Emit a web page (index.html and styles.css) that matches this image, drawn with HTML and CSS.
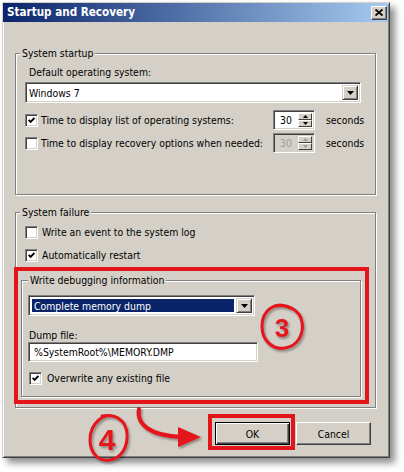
FILE: index.html
```html
<!DOCTYPE html>
<html>
<head>
<meta charset="utf-8">
<title>Startup and Recovery</title>
<link rel="stylesheet" href="styles.css">
</head>
<body>
<div class="stage">
  <div class="window">
    <div class="titlebar">
      <span class="title">Startup and Recovery</span>
      <span class="close"><svg width="8" height="7" viewBox="0 0 8 7"><path d="M0.5 0.5 L7.5 6.5 M7.5 0.5 L0.5 6.5" stroke="#000" stroke-width="1.8" fill="none"/></svg></span>
    </div>
    <div class="body">
      <fieldset class="group g-startup">
        <legend>System startup</legend>
        <div class="label">Default operating system:</div>
        <div class="combo combo-os">
          <span class="combo-text">Windows 7</span>
          <span class="drop"><svg width="7" height="4" viewBox="0 0 7 4"><polygon points="0,0 7,0 3.5,4" fill="#000"/></svg></span>
        </div>
        <div class="timing">
          <span class="cb checked"><svg width="7" height="7" viewBox="0 0 7 7"><path d="M0.6 2.8 L2.6 4.8 L6.4 1" stroke="#000" stroke-width="1.9" fill="none"/></svg></span>
          <span class="cbl">Time to display list of operating systems:</span>
          <span class="spin">
            <span class="spin-val">30</span>
            <span class="spin-btns">
              <span class="sb"><svg width="5" height="3" viewBox="0 0 5 3"><polygon points="2.5,0 5,3 0,3" fill="#000"/></svg></span>
              <span class="sb"><svg width="5" height="3" viewBox="0 0 5 3"><polygon points="0,0 5,0 2.5,3" fill="#000"/></svg></span>
            </span>
          </span>
          <span class="unit">seconds</span>

          <span class="cb"></span>
          <span class="cbl">Time to display recovery options when needed:</span>
          <span class="spin disabled">
            <span class="spin-val">30</span>
            <span class="spin-btns">
              <span class="sb"><svg width="5" height="3" viewBox="0 0 5 3"><polygon points="2.5,0 5,3 0,3" fill="#a09c94"/></svg></span>
              <span class="sb"><svg width="5" height="3" viewBox="0 0 5 3"><polygon points="0,0 5,0 2.5,3" fill="#a09c94"/></svg></span>
            </span>
          </span>
          <span class="unit">seconds</span>
        </div>
      </fieldset>

      <fieldset class="group g-failure">
        <legend>System failure</legend>
        <div class="check-row">
          <span class="cb"></span>
          <span class="cbl">Write an event to the system log</span>
        </div>
        <div class="check-row">
          <span class="cb checked"><svg width="7" height="7" viewBox="0 0 7 7"><path d="M0.6 2.8 L2.6 4.8 L6.4 1" stroke="#000" stroke-width="1.9" fill="none"/></svg></span>
          <span class="cbl">Automatically restart</span>
        </div>

        <fieldset class="group g-debug">
          <legend>Write debugging information</legend>
          <div class="combo combo-dump">
            <span class="combo-text selected">Complete memory dump</span>
            <span class="drop"><svg width="7" height="4" viewBox="0 0 7 4"><polygon points="0,0 7,0 3.5,4" fill="#000"/></svg></span>
          </div>
          <div class="label dump-label">Dump file:</div>
          <div class="edit">%SystemRoot%\MEMORY.DMP</div>
          <div class="check-row overwrite">
            <span class="cb checked"><svg width="7" height="7" viewBox="0 0 7 7"><path d="M0.6 2.8 L2.6 4.8 L6.4 1" stroke="#000" stroke-width="1.9" fill="none"/></svg></span>
            <span class="cbl">Overwrite any existing file</span>
          </div>
        </fieldset>
      </fieldset>

      <div class="buttons">
        <button class="btn default">OK</button>
        <button class="btn">Cancel</button>
      </div>
    </div>
  </div>

  <svg class="annotations" width="404" height="472" viewBox="0 0 404 472">
    <defs>
      <filter id="sh" x="-20%" y="-20%" width="140%" height="140%">
        <feDropShadow dx="1.5" dy="2" stdDeviation="1.3" flood-color="#000" flood-opacity="0.35"/>
      </filter>
    </defs>
    <rect x="16" y="269" width="351" height="133" fill="none" stroke="#e4141b" stroke-width="4"/>
    <rect x="210" y="416" width="83" height="32" fill="none" stroke="#e4141b" stroke-width="4"/>
    <g filter="url(#sh)" fill="none" stroke="#e4141b" stroke-width="3" stroke-linecap="round">
      <path d="M290 308 C276 300, 262 310, 262 326 C262 342, 274 350, 285 348 C298 346, 304 334, 302 322 C300 310, 288 304, 276 306"/>
      <path d="M118 418 C104 410, 90 424, 90 440 C90 454, 100 462, 110 460 C122 458, 128 446, 127 434 C126 420, 116 414, 102 416"/>
      <path d="M139 409 C136 424, 150 436, 182 437" stroke-width="4"/>
    </g>
    <g filter="url(#sh)">
      <polygon points="178,427 201,437 178,447" fill="#e4141b"/>
      <text class="num" x="282" y="337" text-anchor="middle" font-size="26">3</text>
      <text class="num" x="107" y="450" text-anchor="middle" font-size="30">4</text>
    </g>
  </svg>
</div>
</body>
</html>
```
FILE: styles.css
```css
* { box-sizing: border-box; }

body {
  margin: 0;
  background: #fff;
  font-family: "DejaVu Sans Condensed", "DejaVu Sans", sans-serif;
  font-size: 10.4px;
  color: #000;
}

.stage {
  position: relative;
  width: 404px;
  height: 472px;
  padding: 2px 0 0 2px;
}

.window {
  width: 388px;
  background: #d4d0c8;
  border: 1px solid;
  border-color: #d4d0c8 #404040 #404040 #d4d0c8;
  box-shadow: inset 1px 1px 0 #fff, inset -1px -1px 0 #808080, 5px 5px 7px rgba(0, 0, 0, 0.45);
  padding: 0 1px 1px 0;
}

.titlebar {
  height: 19px;
  display: flex;
  align-items: center;
  padding-left: 4px;
  background: linear-gradient(to right, #0a246a, #a6caf0);
}

.title {
  color: #fff;
  font-weight: bold;
  font-size: 11.6px;
  line-height: 13px;
}

.close {
  margin-left: auto;
  margin-right: 1px;
  width: 16px;
  height: 14px;
  display: flex;
  align-items: center;
  justify-content: center;
  background: #d4d0c8;
  border: 1px solid;
  border-color: #fff #404040 #404040 #fff;
  box-shadow: inset -1px -1px 0 #808080;
}

.body {
  display: flex;
  flex-direction: column;
  padding: 0 12px 11px 12px;
}

.group {
  margin: 0;
  border: 1px solid #808080;
  box-shadow: inset 1px 1px 0 #fff, 1px 1px 0 #fff;
  min-inline-size: 0;
}

.group legend {
  padding: 0 2px;
  margin-left: -5px;
  background: #d4d0c8;
  line-height: 13px;
}

.g-startup {
  margin-top: 25px;
  padding: 6px 9px 41px 9px;
}

.label {
  line-height: 13px;
  margin-left: 4px;
}

.combo {
  height: 21px;
  display: flex;
  align-items: stretch;
  padding: 2px;
  background: #fff;
  border: 1px solid;
  border-color: #808080 #fff #fff #808080;
  box-shadow: inset 1px 1px 0 #404040, inset -1px -1px 0 #d4d0c8;
}

.combo-os {
  width: 336px;
  margin-top: 3px;
}

.combo-text {
  flex: 1;
  display: flex;
  align-items: center;
  padding-left: 1px;
  white-space: nowrap;
}

.drop {
  width: 16px;
  display: flex;
  align-items: center;
  justify-content: center;
  background: #d4d0c8;
  border: 1px solid;
  border-color: #d4d0c8 #404040 #404040 #d4d0c8;
  box-shadow: inset 1px 1px 0 #fff, inset -1px -1px 0 #808080;
}

.timing {
  margin-top: 7px;
  display: grid;
  grid-template-columns: 16px 232px 53px auto;
  grid-auto-rows: 20px;
  row-gap: 3px;
  align-items: center;
}

.cb {
  width: 13px;
  height: 13px;
  display: flex;
  align-items: center;
  justify-content: center;
  background: #fff;
  border: 1px solid;
  border-color: #808080 #fff #fff #808080;
  box-shadow: inset 1px 1px 0 #404040, inset -1px -1px 0 #d4d0c8;
}

.cbl {
  white-space: nowrap;
  line-height: 13px;
}

.spin {
  width: 42px;
  height: 20px;
  display: flex;
  padding: 2px;
  background: #fff;
  border: 1px solid;
  border-color: #808080 #fff #fff #808080;
  box-shadow: inset 1px 1px 0 #404040, inset -1px -1px 0 #d4d0c8;
}

.spin-val {
  flex: 1;
  display: flex;
  align-items: center;
  padding-left: 4px;
}

.spin-btns {
  width: 14px;
  display: flex;
  flex-direction: column;
}

.sb {
  flex: 1;
  display: flex;
  align-items: center;
  justify-content: center;
  background: #d4d0c8;
  border: 1px solid;
  border-color: #fff #404040 #404040 #fff;
}

.spin.disabled {
  background: #d4d0c8;
}

.spin.disabled .spin-val {
  color: #a09c94;
}

.unit {
  white-space: nowrap;
}

.g-failure {
  margin-top: 11px;
  padding: 5px 9px 10px 9px;
}

.check-row {
  display: flex;
  align-items: center;
  gap: 4px;
  height: 17px;
}

.check-row + .check-row {
  margin-top: 6px;
}

.g-debug {
  margin: 10px 5px 0 -4px;
  padding: 8px 6px 9px 6px;
}

.g-debug legend {
  margin-left: 0;
}

.combo-dump {
  width: 227px;
}

.combo-text.selected {
  margin: 1px 2px 1px 1px;
  padding-left: 2px;
  background: #0a246a;
  color: #fff;
}

.dump-label {
  margin: 13px 0 0 1px;
}

.edit {
  width: 230px;
  height: 20px;
  display: flex;
  align-items: center;
  padding-left: 5px;
  background: #fff;
  border: 1px solid;
  border-color: #808080 #fff #fff #808080;
  box-shadow: inset 1px 1px 0 #404040, inset -1px -1px 0 #d4d0c8;
}

.check-row.overwrite {
  margin: 8px 0 0 1px;
  gap: 5px;
}

.buttons {
  display: flex;
  justify-content: flex-end;
  gap: 6px;
  margin: 14px 5px 0 0;
}

.btn {
  width: 75px;
  height: 23px;
  padding: 0;
  font: inherit;
  color: #000;
  background: #d4d0c8;
  border: 1px solid;
  border-color: #fff #404040 #404040 #fff;
  box-shadow: inset -1px -1px 0 #808080;
}

.btn.default {
  border: 1px solid #000;
  box-shadow: inset 1px 1px 0 #fff, inset -1px -1px 0 #404040, inset -2px -2px 0 #808080;
}

.annotations {
  position: absolute;
  left: 0;
  top: 0;
  pointer-events: none;
}

.num {
  font-family: "Liberation Sans", Arial, sans-serif;
  font-weight: bold;
  fill: #e4141b;
}
```
